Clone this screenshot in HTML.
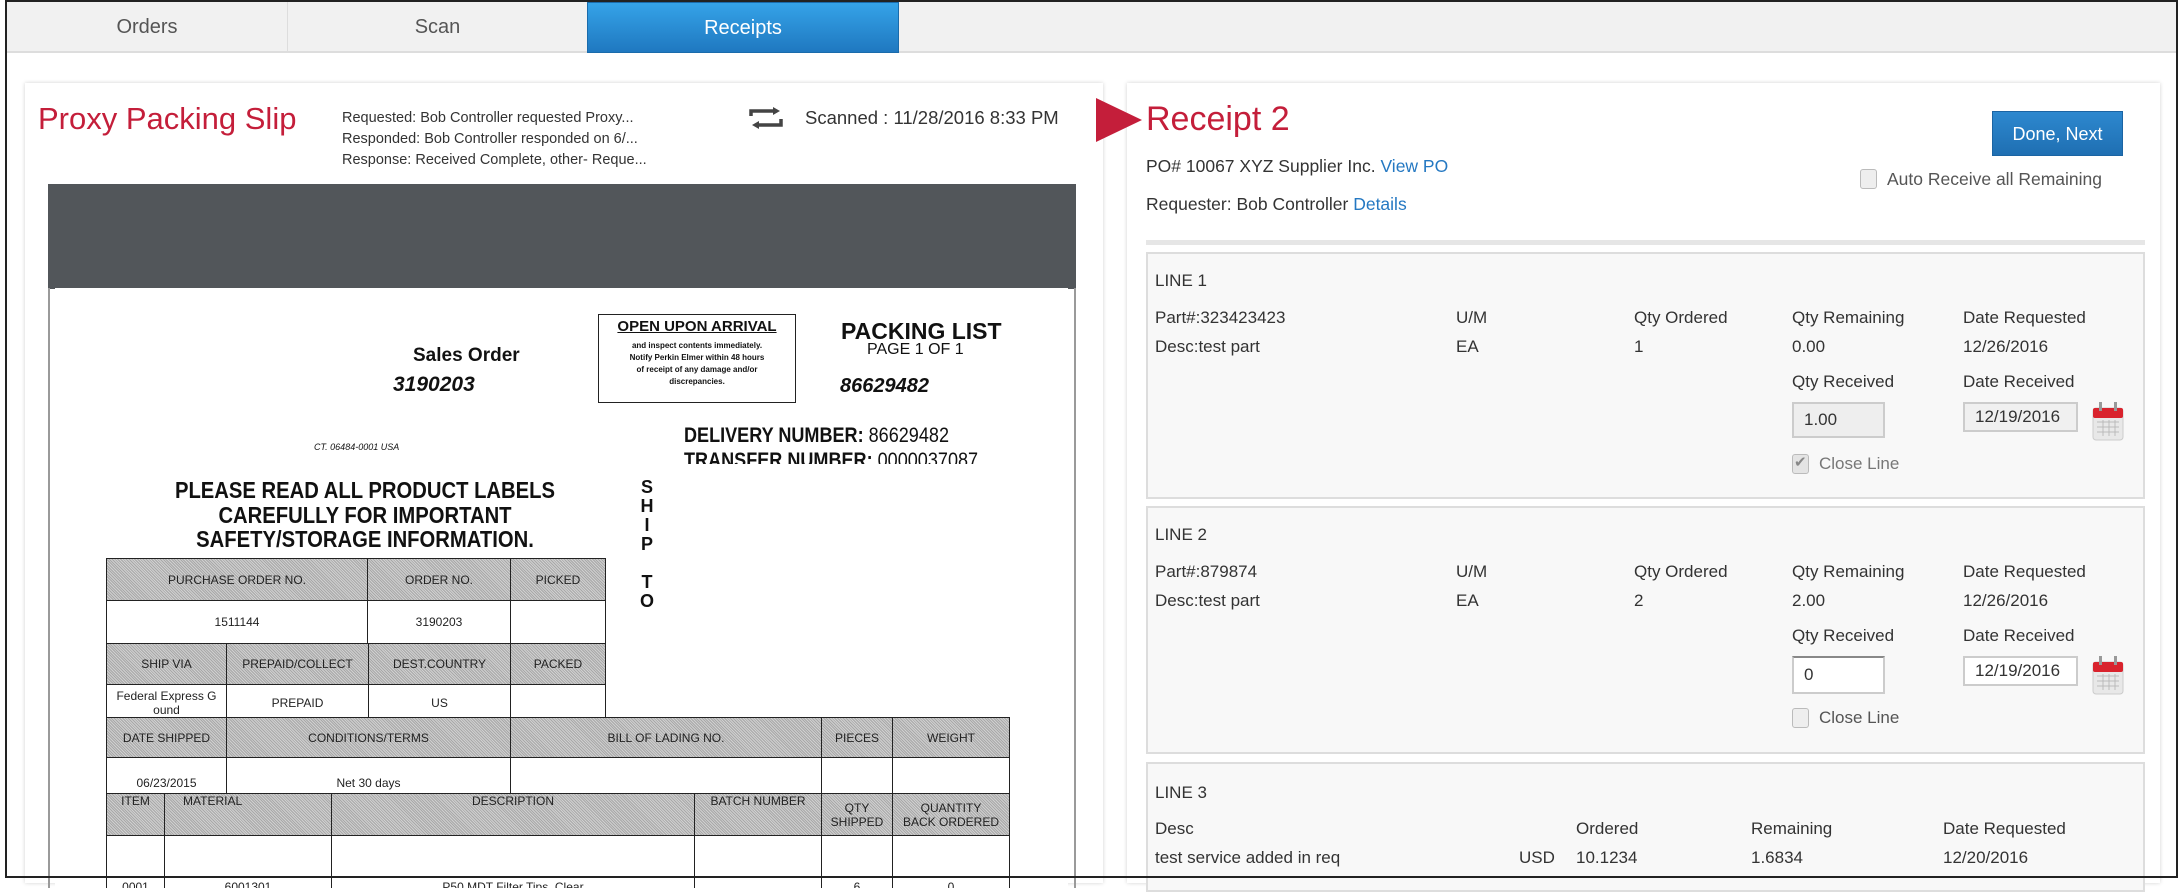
<!DOCTYPE html>
<html><head><meta charset="utf-8"><style>
*{margin:0;padding:0;box-sizing:border-box}
body{width:2181px;height:881px;overflow:hidden;background:#fff;font-family:"Liberation Sans",sans-serif;color:#333;position:relative}
.a{position:absolute;white-space:nowrap}
.frame{position:absolute;left:5px;top:0;width:2173px;height:878px;border:2px solid #222;border-top-width:2px}
.tabs{position:absolute;left:7px;top:2px;width:2169px;height:51px;background:#f1f1f1;border-bottom:2px solid #ddd}
.tab{position:absolute;top:0;height:51px;line-height:51px;text-align:center;font-size:20px;color:#555}
.panel{position:absolute;top:83px;background:#fff;box-shadow:0 0 4px rgba(0,0,0,.18)}
.doc .a{font-weight:bold;color:#111}
.sh{background:#b9b9b9 repeating-linear-gradient(45deg,#a8a8a8 0 1px,#d0d0d0 1px 2px)}
.cell{position:absolute;border:1.5px solid #222;font-size:12px;color:#222;text-align:center;display:flex;align-items:center;justify-content:center}
.box{position:absolute;left:1146px;width:999px;background:#f8f8f8;border:2px solid #ddd;font-size:17px}
.box .a{font-size:17px;color:#333}
.inp{position:absolute;border:2px solid #ccc;background:#fff;font-size:17px;padding-left:10px;display:flex;align-items:center}
.cb{position:absolute;width:17px;height:20px;border:1.5px solid #bbb;border-radius:3px;background:#eee}
.cx{display:inline-block;transform:scaleX(.86);transform-origin:left}
</style></head><body>
<div class="tabs">
 <div class="tab" style="left:0;width:281px;border-right:1px solid #ddd">Orders</div>
 <div class="tab" style="left:281px;width:299px">Scan</div>
 <div class="tab" style="left:580px;width:312px;background:linear-gradient(#35a3e8,#1f78c0);color:#fff;border:1px solid #1a6bab">Receipts</div>
</div>

<div class="panel" style="left:25px;width:1078px;height:800px"></div>
<div class="a" style="left:38px;top:101px;font-size:31px;color:#c41e3a">Proxy Packing Slip</div>
<div class="a" style="left:342px;top:108px;font-size:14.5px;line-height:21px;color:#333">Requested: Bob Controller requested Proxy...<br>Responded: Bob Controller responded on 6/...<br>Response: Received Complete, other- Reque...</div>
<svg class="a" style="left:749px;top:107px" width="34" height="22" viewBox="0 0 34 22"><path d="M2 9V4h24" fill="none" stroke="#444" stroke-width="3.5"/><path d="M24 0l7 4-7 4z" fill="#444"/><path d="M32 12v6H8" fill="none" stroke="#444" stroke-width="3.5"/><path d="M10 14l-7 4 7 4z" fill="#444"/></svg>
<div class="a" style="left:805px;top:107px;font-size:18.5px;color:#333">Scanned : 11/28/2016 8:33 PM</div>

<div class="a" style="left:48px;top:184px;width:1028px;height:105px;background:#52565a"></div>
<div class="a" style="left:48px;top:288px;width:2px;height:600px;background:#9a9a9a"></div>
<div class="a" style="left:1074px;top:288px;width:2px;height:600px;background:#9a9a9a"></div>
<div class="a doc" style="left:55px;top:288px;width:1013px;height:600px;background:#fff;overflow:hidden">
 <div style="position:absolute;left:-55px;top:-288px;width:1100px;height:900px">
 <div class="a" style="left:413px;top:345px;font-size:19px">Sales Order</div>
 <div class="a" style="left:393px;top:373px;font-size:21px;font-style:italic">3190203</div>
 <div class="a" style="left:598px;top:314px;width:198px;height:89px;border:1.5px solid #222;text-align:center;font-size:8px;line-height:12px;padding-top:2px"><div style="font-size:15px;line-height:20px;text-decoration:underline;margin-bottom:3px">OPEN UPON ARRIVAL</div>and inspect contents immediately.<br>Notify Perkin Elmer within 48 hours<br>of receipt of any damage and/or<br>discrepancies.</div>
 <div class="a" style="left:841px;top:318px;font-size:23px">PACKING LIST</div>
 <div class="a" style="left:867px;top:341px;font-size:16px;font-weight:normal">PAGE 1 OF 1</div>
 <div class="a" style="left:840px;top:375px;font-size:20px;font-style:italic">86629482</div>
 <div class="a" style="left:314px;top:442px;font-size:9px;font-style:italic;font-weight:normal">CT. 06484-0001 USA</div>
 <div class="a" style="left:684px;top:424px;font-size:21px"><span class="cx">DELIVERY NUMBER: <span style="font-weight:normal">86629482</span></span></div>
 <div class="a" style="left:684px;top:449px;font-size:21px"><span class="cx">TRANSFER NUMBER: <span style="font-weight:normal">0000037087</span></span></div>
 <div class="a" style="left:679px;top:464px;width:370px;height:230px;background:#fff"></div>
 <div class="a" style="left:125px;top:478px;width:480px;text-align:center;font-size:23px;line-height:24.5px"><div style="transform:scaleX(.88)">PLEASE READ ALL PRODUCT LABELS<br>CAREFULLY FOR IMPORTANT<br>SAFETY/STORAGE INFORMATION.</div></div>
 <div class="a" style="left:639px;top:478px;width:16px;text-align:center;font-size:18px;line-height:19px">S<br>H<br>I<br>P<br><br>T<br>O</div>
 <div class="cell sh" style="left:106px;top:558px;width:262px;height:43px">PURCHASE ORDER NO.</div>
 <div class="cell sh" style="left:367px;top:558px;width:144px;height:43px">ORDER NO.</div>
 <div class="cell sh" style="left:510px;top:558px;width:96px;height:43px">PICKED</div>
 <div class="cell" style="left:106px;top:600px;width:262px;height:44px">1511144</div>
 <div class="cell" style="left:367px;top:600px;width:144px;height:44px">3190203</div>
 <div class="cell" style="left:510px;top:600px;width:96px;height:44px"></div>
 <div class="cell sh" style="left:106px;top:643px;width:121px;height:42px">SHIP VIA</div>
 <div class="cell sh" style="left:226px;top:643px;width:143px;height:42px">PREPAID/COLLECT</div>
 <div class="cell sh" style="left:368px;top:643px;width:143px;height:42px">DEST.COUNTRY</div>
 <div class="cell sh" style="left:510px;top:643px;width:96px;height:42px">PACKED</div>
 <div class="cell" style="left:106px;top:684px;width:121px;height:37px;line-height:14px">Federal Express G<br>ound</div>
 <div class="cell" style="left:226px;top:684px;width:143px;height:37px">PREPAID</div>
 <div class="cell" style="left:368px;top:684px;width:143px;height:37px">US</div>
 <div class="cell" style="left:510px;top:684px;width:96px;height:37px"></div>
 <div class="cell sh" style="left:106px;top:717px;width:121px;height:41px">DATE SHIPPED</div>
 <div class="cell sh" style="left:226px;top:717px;width:285px;height:41px">CONDITIONS/TERMS</div>
 <div class="cell sh" style="left:510px;top:717px;width:312px;height:41px">BILL OF LADING NO.</div>
 <div class="cell sh" style="left:821px;top:717px;width:72px;height:41px">PIECES</div>
 <div class="cell sh" style="left:892px;top:717px;width:118px;height:41px">WEIGHT</div>
 <div class="cell" style="left:106px;top:757px;width:121px;height:37px;padding-top:14px">06/23/2015</div>
 <div class="cell" style="left:226px;top:757px;width:285px;height:37px;padding-top:14px">Net 30 days</div>
 <div class="cell" style="left:510px;top:757px;width:312px;height:37px"></div>
 <div class="cell" style="left:821px;top:757px;width:72px;height:37px"></div>
 <div class="cell" style="left:892px;top:757px;width:118px;height:37px"></div>
 <div class="cell sh" style="left:106px;top:793px;width:59px;height:43px;align-items:flex-start">ITEM</div>
 <div class="cell sh" style="left:164px;top:793px;width:168px;height:43px;align-items:flex-start;justify-content:flex-start;padding-left:18px">MATERIAL</div>
 <div class="cell sh" style="left:331px;top:793px;width:364px;height:43px;align-items:flex-start">DESCRIPTION</div>
 <div class="cell sh" style="left:694px;top:793px;width:128px;height:43px;align-items:flex-start">BATCH NUMBER</div>
 <div class="cell sh" style="left:821px;top:793px;width:72px;height:43px;line-height:14px">QTY<br>SHIPPED</div>
 <div class="cell sh" style="left:892px;top:793px;width:118px;height:43px;line-height:14px">QUANTITY<br>BACK ORDERED</div>
 <div class="cell" style="left:106px;top:835px;width:59px;height:60px;align-items:flex-end">0001</div>
 <div class="cell" style="left:164px;top:835px;width:168px;height:60px;align-items:flex-end">6001301</div>
 <div class="cell" style="left:331px;top:835px;width:364px;height:60px;align-items:flex-end">P50 MDT Filter Tips, Clear</div>
 <div class="cell" style="left:694px;top:835px;width:128px;height:60px"></div>
 <div class="cell" style="left:821px;top:835px;width:72px;height:60px;align-items:flex-end">6</div>
 <div class="cell" style="left:892px;top:835px;width:118px;height:60px;align-items:flex-end">0</div>
 </div>
</div>

<div class="panel" style="left:1127px;width:1033px;height:800px"></div>
<svg class="a" style="left:1096px;top:98px" width="46" height="44"><path d="M0 0L46 22L0 44z" fill="#c41e3a"/></svg>
<div class="a" style="left:1146px;top:100px;font-size:34px;color:#c41e3a">Receipt 2</div>
<div class="a" style="left:1992px;top:111px;width:131px;height:45px;background:linear-gradient(#2d88cf,#1f6fb2);color:#fff;font-size:18px;line-height:45px;text-align:center;border:1px solid #1b64a3">Done, Next</div>
<div class="a" style="left:1146px;top:156px;font-size:17.5px">PO# 10067 XYZ Supplier Inc. <span style="color:#2478c2">View PO</span></div>
<div class="a" style="left:1146px;top:194px;font-size:17.5px">Requester: Bob Controller <span style="color:#2478c2">Details</span></div>
<div class="cb" style="left:1860px;top:169px"></div>
<div class="a" style="left:1887px;top:169px;font-size:17.5px;color:#555">Auto Receive all Remaining</div>
<div class="a" style="left:1146px;top:240px;width:999px;height:5px;background:#e6e6e6"></div>

<div class="box" style="top:252px;height:247px">
 <div class="a" style="left:7px;top:17px">LINE 1</div>
 <div class="a" style="left:7px;top:54px">Part#:323423423</div><div class="a" style="left:7px;top:83px">Desc:test part</div>
 <div class="a" style="left:308px;top:54px">U/M</div><div class="a" style="left:308px;top:83px">EA</div>
 <div class="a" style="left:486px;top:54px">Qty Ordered</div><div class="a" style="left:486px;top:83px">1</div>
 <div class="a" style="left:644px;top:54px">Qty Remaining</div><div class="a" style="left:644px;top:83px">0.00</div>
 <div class="a" style="left:815px;top:54px">Date Requested</div><div class="a" style="left:815px;top:83px">12/26/2016</div>
 <div class="a" style="left:644px;top:118px">Qty Received</div><div class="a" style="left:815px;top:118px">Date Received</div>
 <div class="inp" style="left:644px;top:148px;width:93px;height:36px;background:#eee">1.00</div>
 <div class="inp" style="left:815px;top:148px;width:115px;height:30px;background:#f0f0f0">12/19/2016</div>
 <svg class="a" style="left:943px;top:146px" width="34" height="42" viewBox="0 0 34 42"><rect x="2" y="8" width="30" height="32" rx="3" fill="#e8e8e8" stroke="#ccc"/><rect x="2" y="8" width="30" height="10" rx="2" fill="#d9232d"/><rect x="8" y="2" width="3" height="9" fill="#999"/><rect x="23" y="2" width="3" height="9" fill="#999"/><path d="M6 22h22M6 27h22M6 32h22M12 20v16M18 20v16M24 20v16" stroke="#bbb"/></svg>
 <div class="cb" style="left:644px;top:200px;background:#e4e4e4"></div>
 <div class="a" style="left:646px;top:199px;font-size:15px;color:#888">✔</div>
 <div class="a" style="left:671px;top:200px;color:#777">Close Line</div>
</div>

<div class="box" style="top:506px;height:248px">
 <div class="a" style="left:7px;top:17px">LINE 2</div>
 <div class="a" style="left:7px;top:54px">Part#:879874</div><div class="a" style="left:7px;top:83px">Desc:test part</div>
 <div class="a" style="left:308px;top:54px">U/M</div><div class="a" style="left:308px;top:83px">EA</div>
 <div class="a" style="left:486px;top:54px">Qty Ordered</div><div class="a" style="left:486px;top:83px">2</div>
 <div class="a" style="left:644px;top:54px">Qty Remaining</div><div class="a" style="left:644px;top:83px">2.00</div>
 <div class="a" style="left:815px;top:54px">Date Requested</div><div class="a" style="left:815px;top:83px">12/26/2016</div>
 <div class="a" style="left:644px;top:118px">Qty Received</div><div class="a" style="left:815px;top:118px">Date Received</div>
 <div class="inp" style="left:644px;top:148px;width:93px;height:38px;border-top-color:#888">0</div>
 <div class="inp" style="left:815px;top:148px;width:115px;height:30px">12/19/2016</div>
 <svg class="a" style="left:943px;top:146px" width="34" height="42" viewBox="0 0 34 42"><rect x="2" y="8" width="30" height="32" rx="3" fill="#e8e8e8" stroke="#ccc"/><rect x="2" y="8" width="30" height="10" rx="2" fill="#d9232d"/><rect x="8" y="2" width="3" height="9" fill="#999"/><rect x="23" y="2" width="3" height="9" fill="#999"/><path d="M6 22h22M6 27h22M6 32h22M12 20v16M18 20v16M24 20v16" stroke="#bbb"/></svg>
 <div class="cb" style="left:644px;top:200px"></div>
 <div class="a" style="left:671px;top:200px;color:#555">Close Line</div>
</div>

<div class="box" style="top:762px;height:130px">
 <div class="a" style="left:7px;top:19px">LINE 3</div>
 <div class="a" style="left:7px;top:55px">Desc</div><div class="a" style="left:7px;top:84px">test service added in req</div>
 <div class="a" style="left:371px;top:84px">USD</div>
 <div class="a" style="left:428px;top:55px">Ordered</div><div class="a" style="left:428px;top:84px">10.1234</div>
 <div class="a" style="left:603px;top:55px">Remaining</div><div class="a" style="left:603px;top:84px">1.6834</div>
 <div class="a" style="left:795px;top:55px">Date Requested</div><div class="a" style="left:795px;top:84px">12/20/2016</div>
</div>

<div class="frame"></div>
</body></html>
